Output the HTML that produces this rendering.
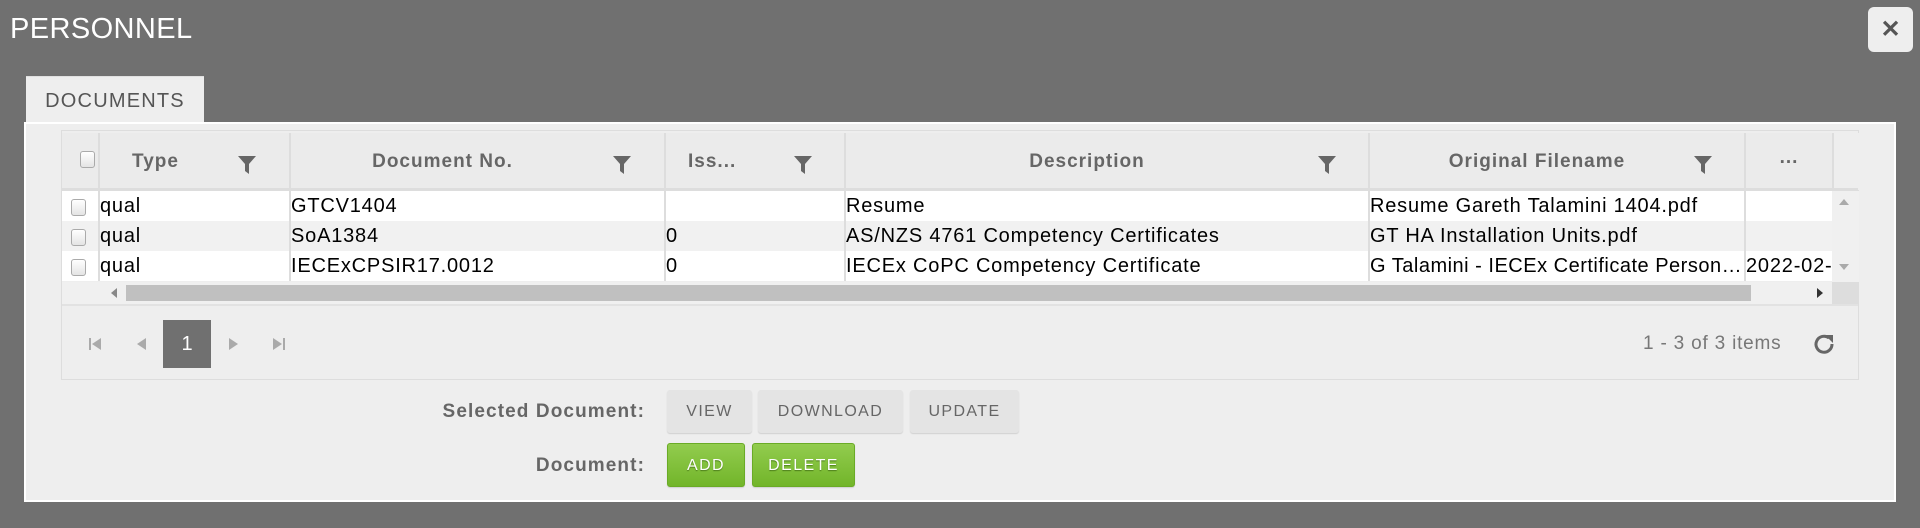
<!DOCTYPE html>
<html><head><meta charset="utf-8"><style>
*{box-sizing:border-box;margin:0;padding:0}
body{width:1920px;height:528px;background:#707070;font-family:"Liberation Sans",Arial,sans-serif;position:relative;overflow:hidden}
.abs{position:absolute}
.title{left:10px;top:13px;font-size:29px;color:#fff;letter-spacing:0.4px}
.close{left:1868px;top:7px;width:45px;height:45px;background:#eee;border-radius:6px;color:#555;font-size:24px;text-align:center;line-height:45px;font-weight:bold}
.tab{left:26px;top:76px;width:178px;height:47px;background:#eee;color:#555;font-size:20px;text-align:center;line-height:48px;border-top:1px solid #e0e0e0;letter-spacing:1.2px}
.panel{left:24px;top:122px;width:1872px;height:380px;background:#eee;border:2px solid #fff}
.grid{left:61px;top:130px;width:1798px;height:250px;border:1px solid #ddd;background:#eee}
.hdr{top:133px;height:57px;background:#ebebeb}
.hc{position:absolute;top:133px;height:57px;border-left:2px solid #ddd;font-weight:bold;color:#666;font-size:19px;line-height:57px;text-align:center;letter-spacing:1px}
.row{position:absolute;left:62px;width:1770px;height:30px}
.cell{position:absolute;height:30px;line-height:30px;font-size:20px;color:#000;white-space:nowrap;overflow:hidden;border-left:2px solid #ddd;padding-left:0;letter-spacing:0.8px}
.cb{position:absolute;width:15px;height:17px;border:1px solid #aaa;border-radius:3px;background:linear-gradient(#fff,#e4e4e4)}
.filt{position:absolute;top:22px}
.btn{position:absolute;height:43px;background:#e4e4e4;border-radius:3px;color:#666;font-size:16px;text-align:center;line-height:43px;box-shadow:0 1px 1px #d0d0d0;letter-spacing:1.4px}
.g{background:linear-gradient(#92cc4e,#72b52a);color:#fff;text-shadow:0 1px 1px #4a7a1a;border:1px solid #6aab26}
.lbl{position:absolute;font-weight:bold;color:#666;font-size:19px;text-align:right;width:400px;letter-spacing:1.1px}
</style></head><body>
<div class="abs title">PERSONNEL</div>
<div class="abs close">✕</div>
<div class="abs tab">DOCUMENTS</div>
<div class="abs panel"></div>
<div class="abs grid"></div>
<div class="abs hdr" style="left:62px;width:1796px"></div>
<div class="cb" style="left:80px;top:151px"></div>
<div class="hc" style="left:98px;width:191px;text-align:left;padding-left:32px">Type<svg class="filt" style="left:137px" width="20" height="20" viewBox="0 0 20 20"><path d="M1 1h18l-7 8v10l-4-3V9z" fill="#666"/></svg></div>
<div class="hc" style="left:289px;width:375px;padding-right:70px">Document No.<svg class="filt" style="left:321px" width="20" height="20" viewBox="0 0 20 20"><path d="M1 1h18l-7 8v10l-4-3V9z" fill="#666"/></svg></div>
<div class="hc" style="left:664px;width:180px;text-align:left;padding-left:22px">Iss...<svg class="filt" style="left:127px" width="20" height="20" viewBox="0 0 20 20"><path d="M1 1h18l-7 8v10l-4-3V9z" fill="#666"/></svg></div>
<div class="hc" style="left:844px;width:524px;padding-right:40px">Description<svg class="filt" style="left:471px" width="20" height="20" viewBox="0 0 20 20"><path d="M1 1h18l-7 8v10l-4-3V9z" fill="#666"/></svg></div>
<div class="hc" style="left:1368px;width:376px;padding-right:40px">Original Filename<svg class="filt" style="left:323px" width="20" height="20" viewBox="0 0 20 20"><path d="M1 1h18l-7 8v10l-4-3V9z" fill="#666"/></svg></div>
<div class="hc" style="left:1744px;width:88px;line-height:50px">...</div>
<div class="hc" style="left:1832px;width:27px;background:#eee"></div>
<div class="abs" style="left:62px;top:188px;width:1796px;height:3px;background:#ddd"></div>

<div class="row" style="top:191px;background:#fff"></div>
<div class="row" style="top:221px;background:#f1f1f1"></div>
<div class="row" style="top:251px;background:#fff"></div>
<div class="abs" style="left:1832px;top:191px;width:27px;height:91px;background:#f0f0f0"></div>
<div class="cb" style="left:71px;top:199px"></div>
<div class="cb" style="left:71px;top:229px"></div>
<div class="cb" style="left:71px;top:259px"></div>
<div class="cell" style="left:98px;top:191px;width:191px">qual</div>
<div class="cell" style="left:289px;top:191px;width:375px">GTCV1404</div>
<div class="cell" style="left:664px;top:191px;width:180px"></div>
<div class="cell" style="left:844px;top:191px;width:524px">Resume</div>
<div class="cell" style="left:1368px;top:191px;width:376px">Resume Gareth Talamini 1404.pdf</div>
<div class="cell" style="left:1744px;top:191px;width:88px"></div>
<div class="cell" style="left:98px;top:221px;width:191px">qual</div>
<div class="cell" style="left:289px;top:221px;width:375px">SoA1384</div>
<div class="cell" style="left:664px;top:221px;width:180px">0</div>
<div class="cell" style="left:844px;top:221px;width:524px">AS/NZS 4761 Competency Certificates</div>
<div class="cell" style="left:1368px;top:221px;width:376px">GT HA Installation Units.pdf</div>
<div class="cell" style="left:1744px;top:221px;width:88px"></div>
<div class="cell" style="left:98px;top:251px;width:191px">qual</div>
<div class="cell" style="left:289px;top:251px;width:375px">IECExCPSIR17.0012</div>
<div class="cell" style="left:664px;top:251px;width:180px">0</div>
<div class="cell" style="left:844px;top:251px;width:524px">IECEx CoPC Competency Certificate</div>
<div class="cell" style="left:1368px;top:251px;width:376px;letter-spacing:0.5px">G Talamini - IECEx Certificate Person…</div>
<div class="cell" style="left:1744px;top:251px;width:88px">2022-02-08</div>
<svg class="abs" style="left:1838px;top:198px" width="12" height="8"><path d="M1 7L6 1L11 7z" fill="#aaa"/></svg>
<svg class="abs" style="left:1838px;top:263px" width="12" height="8"><path d="M1 1L6 7L11 1z" fill="#aaa"/></svg>
<div class="abs" style="left:62px;top:282px;width:1770px;height:22px;background:#f0f0f0"></div>
<div class="abs" style="left:1832px;top:282px;width:27px;height:22px;background:#ddd"></div>
<div class="abs" style="left:126px;top:285px;width:1625px;height:16px;background:#c0c0c0"></div>
<svg class="abs" style="left:110px;top:287px" width="8" height="12"><path d="M7 1L1 6L7 11z" fill="#888"/></svg>
<svg class="abs" style="left:1816px;top:287px" width="8" height="12"><path d="M1 1L7 6L1 11z" fill="#333"/></svg>
<div class="abs" style="left:62px;top:304px;width:1796px;height:2px;background:#e2e2e2"></div>
<svg class="abs" style="left:89px;top:338px" width="13" height="12"><rect x="0" y="0" width="2" height="12" fill="#aaa"/><path d="M12 0L3 6L12 12z" fill="#aaa"/></svg>
<svg class="abs" style="left:136px;top:338px" width="10" height="12"><path d="M10 0L1 6L10 12z" fill="#aaa"/></svg>
<div class="abs" style="left:163px;top:320px;width:48px;height:48px;background:#707070;color:#fff;font-size:20px;text-align:center;line-height:48px">1</div>
<svg class="abs" style="left:229px;top:338px" width="10" height="12"><path d="M0 0L9 6L0 12z" fill="#aaa"/></svg>
<svg class="abs" style="left:273px;top:338px" width="13" height="12"><path d="M0 0L9 6L0 12z" fill="#aaa"/><rect x="10" y="0" width="2" height="12" fill="#aaa"/></svg>
<div class="abs" style="left:1643px;top:333px;font-size:19px;color:#777;letter-spacing:0.8px">1 - 3 of 3 items</div>
<svg class="abs" style="left:1812px;top:332px" width="24" height="24" viewBox="0 0 24 24"><path d="M17 6A8 8 0 1 0 20 12" fill="none" stroke="#666" stroke-width="3"/><path d="M13 3h8v8z" fill="#666"/></svg>
<div class="lbl" style="left:245px;top:401px">Selected Document:</div>
<div class="btn" style="left:667px;top:390px;width:85px">VIEW</div>
<div class="btn" style="left:758px;top:390px;width:145px">DOWNLOAD</div>
<div class="btn" style="left:910px;top:390px;width:109px">UPDATE</div>
<div class="lbl" style="left:245px;top:455px">Document:</div>
<div class="btn g" style="left:667px;top:443px;width:78px;height:44px">ADD</div>
<div class="btn g" style="left:752px;top:443px;width:103px;height:44px">DELETE</div>
</body></html>
